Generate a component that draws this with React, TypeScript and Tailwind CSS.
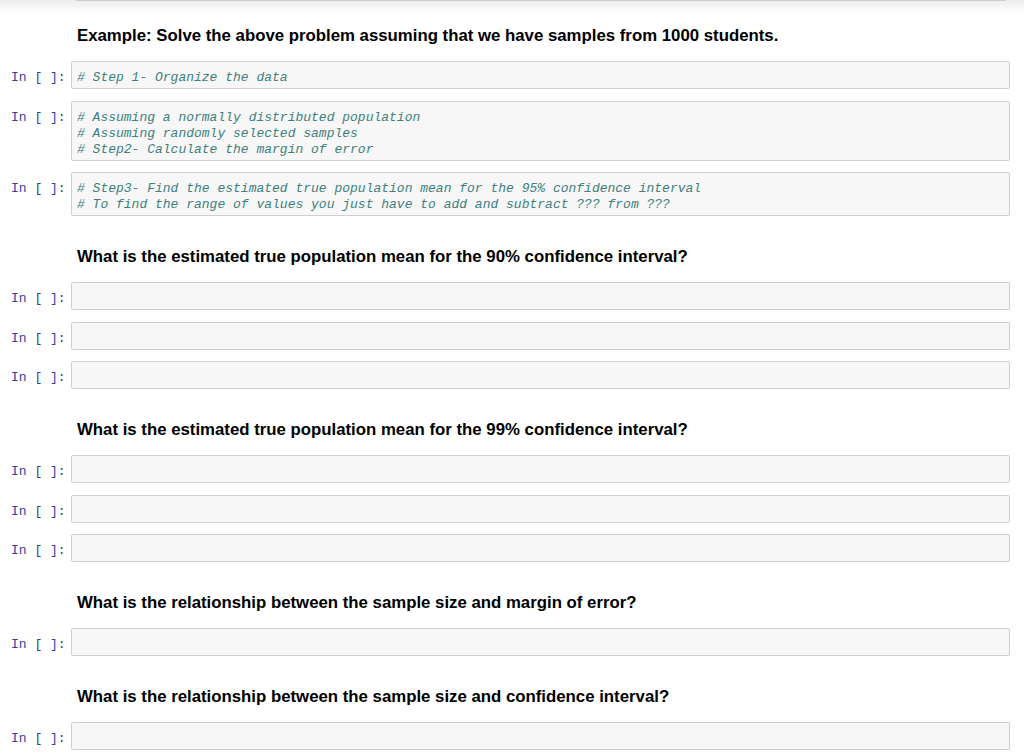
import React from 'react'

const codeFont = { fontFamily: '"Liberation Mono", "Courier New", monospace' }

const Cell = ({ lines = [] }: { lines?: string[] }) => (
  <div className="flex items-start mb-[11.5px]">
    <div className="w-[71px] shrink-0 pl-[11px] pt-[9px] text-[13px] leading-[16px] text-[#303F9F]" style={codeFont}>
      In [ ]:
    </div>
    <div className="w-[939px] min-h-[28px] bg-[#f7f7f7] border border-[#cfcfcf] rounded-[2px] px-[5px] pt-[8px] pb-[2px]">
      {lines.map((l, i) => (
        <div key={i} className="text-[13px] leading-[16px] italic text-[#408080] whitespace-pre" style={codeFont}>
          {l}
        </div>
      ))}
    </div>
  </div>
)

const Heading = ({ children, first = false }: { children: React.ReactNode; first?: boolean }) => (
  <div
    className={`pl-[77px] ${first ? 'mt-[26px] mb-[15px]' : 'mt-[31px] mb-[15px]'} text-[16.8px] leading-[20px] font-bold text-black`}
    style={{ fontFamily: '"Liberation Sans", Arial, sans-serif' }}
  >
    {children}
  </div>
)

export default function App() {
  return (
    <div className="relative w-[1024px] h-[754px] bg-white overflow-hidden">
      <div className="h-[14px] bg-gradient-to-b from-[#ececec] to-white">
        <div className="ml-[76px] w-[930px] h-[1px] bg-[#cdcdcd]" />
      </div>
      <div className="-mt-[14px] flow-root">
        <Heading first>Example: Solve the above problem assuming that we have samples from 1000 students.</Heading>
        <Cell lines={['# Step 1- Organize the data']} />
        <Cell lines={['# Assuming a normally distributed population', '# Assuming randomly selected samples', '# Step2- Calculate the margin of error']} />
        <Cell lines={['# Step3- Find the estimated true population mean for the 95% confidence interval', '# To find the range of values you just have to add and subtract ??? from ???']} />
        <Heading>What is the estimated true population mean for the 90% confidence interval?</Heading>
        <Cell lines={['']} />
        <Cell lines={['']} />
        <Cell lines={['']} />
        <Heading>What is the estimated true population mean for the 99% confidence interval?</Heading>
        <Cell lines={['']} />
        <Cell lines={['']} />
        <Cell lines={['']} />
        <Heading>What is the relationship between the sample size and margin of error?</Heading>
        <Cell lines={['']} />
        <Heading>What is the relationship between the sample size and confidence interval?</Heading>
        <Cell lines={['']} />
      </div>
    </div>
  )
}
